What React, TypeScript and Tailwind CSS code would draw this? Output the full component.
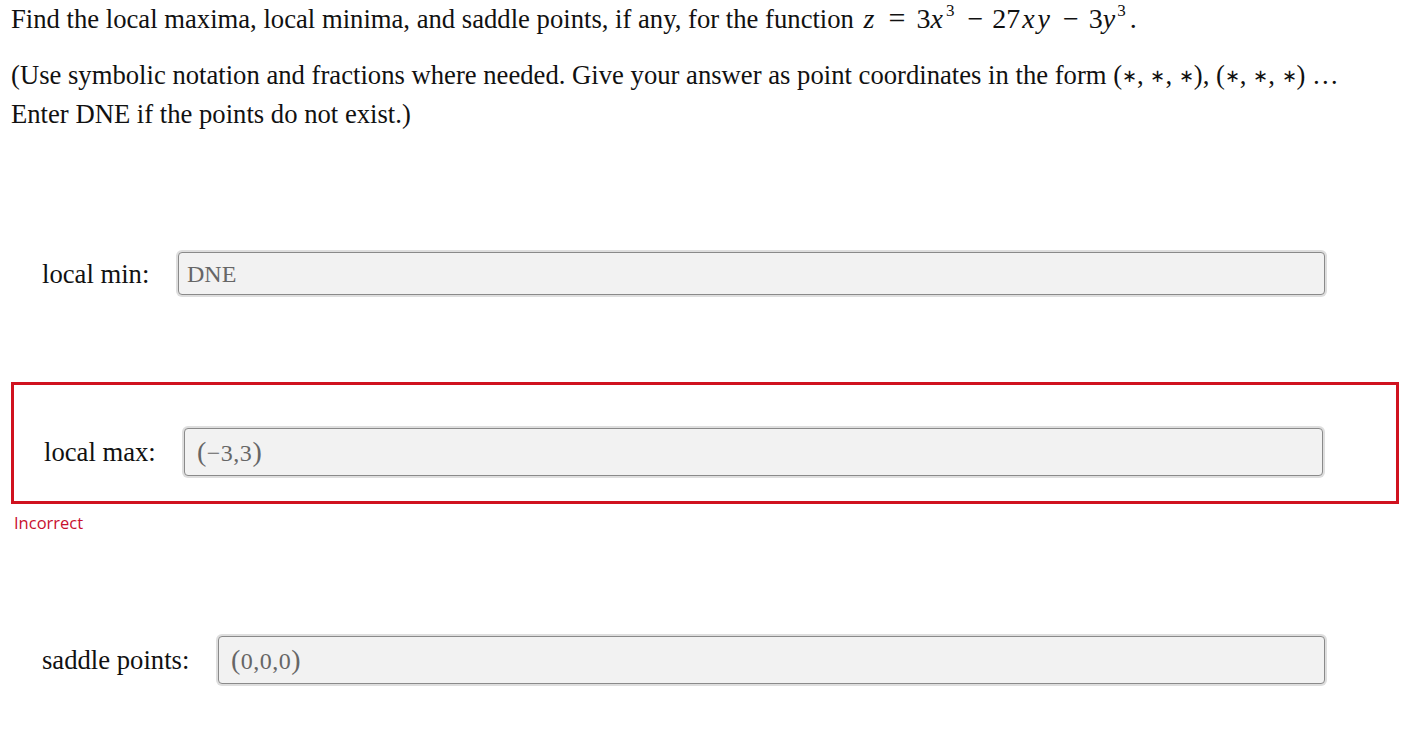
import React from "react";

const serif = { fontFamily: '"Liberation Serif", "Times New Roman", serif' };

function Answer({ value, h }: { value: React.ReactNode; h: string }) {
  return (
    <div
      className={`flex-1 flex items-center rounded-[4px] border border-[#8a8a8a] bg-[#f2f2f2] pl-[8px] text-[24px] text-[#666] shadow-[0_0_0_2px_#dedede] ${h}`}
    >
      {value}
    </div>
  );
}

function Star() {
  return <span className="inline-block leading-none text-[18px] relative top-[-2px]">∗</span>;
}

function MathPair({ text }: { text: string }) {
  return (
    <span className="pl-[4px] tracking-[0.5px]">
      <span className="text-[28px]">(</span>
      {text}
      <span className="text-[28px]">)</span>
    </span>
  );
}

export default function App() {
  return (
    <div className="min-h-screen bg-white text-[#111] text-[26.67px]" style={serif}>
      <div className="pl-[11px] pr-[40px]">
        <p className="leading-[38px]">
          Find the local maxima, local minima, and saddle points, if any, for the function{" "}
          <span className="text-[28px] leading-none">
            <i className="ml-[3px]">z</i>
            <span className="ml-[14px] text-[30px]">=</span>
            <span className="ml-[11px]">3</span>
            <i>x</i>
            <sup className="ml-[3px] text-[17px] top-[-0.7em]">3</sup>
            <span className="ml-[13px]">−</span>
            <span className="ml-[9px]">27</span>
            <i className="ml-[2px]">x</i>
            <i className="ml-[3px]">y</i>
            <span className="ml-[13px]">−</span>
            <span className="ml-[10px]">3</span>
            <i>y</i>
            <sup className="ml-[2px] text-[17px] top-[-0.7em]">3</sup>
            <span className="ml-[4px]">.</span>
          </span>
        </p>
        <p className="mt-[18px] leading-[39px]">
          (Use symbolic notation and fractions where needed. Give your answer as point coordinates in the form (<Star />, <Star />, <Star />), (<Star />, <Star />, <Star />) …
          <br />
          Enter DNE if the points do not exist.)
        </p>
      </div>

      <div className="mt-[118px] flex items-center pl-[42px] pr-[78px]">
        <span className="w-[108px] mr-[28px] whitespace-nowrap">local min:</span>
        <Answer h="h-[43px]" value="DNE" />
      </div>

      <div className="mt-[87px] mr-[4px] ml-[11px] border-[3px] border-[#d0121f] pt-[43px] pb-[25px] pl-[30px] pr-[73px]">
        <div className="flex items-center">
          <span className="w-[113px] mr-[27px] whitespace-nowrap">local max:</span>
          <Answer h="h-[48px]" value={<MathPair text="−3,3" />} />
        </div>
      </div>
      <div
        className="pl-[14px] mt-[8px] text-[16.5px] text-[#c8102e] leading-[22px]"
        style={{ fontFamily: '"Open Sans", "Noto Sans", sans-serif' }}
      >
        Incorrect
      </div>

      <div className="mt-[102px] flex items-center pl-[42px] pr-[78px]">
        <span className="w-[148px] mr-[28px] whitespace-nowrap">saddle points:</span>
        <Answer h="h-[48px]" value={<MathPair text="0,0,0" />} />
      </div>
    </div>
  );
}
